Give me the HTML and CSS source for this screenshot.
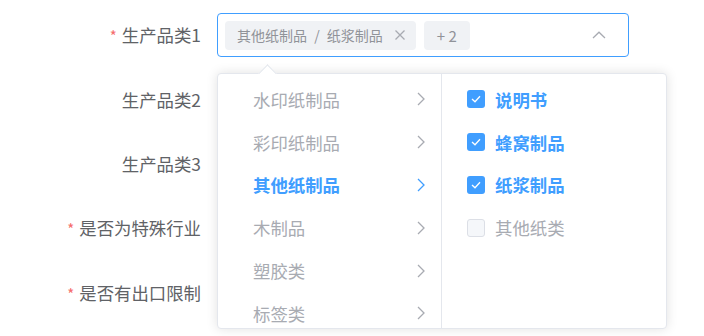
FILE: index.html
```html
<!DOCTYPE html>
<html lang="zh-CN">
<head>
  <meta charset="UTF-8">
  <meta name="viewport" content="width=device-width, initial-scale=1.0">
  <title>生产品类</title>
  <link rel="stylesheet" href="styles.css">
</head>
<body>
  <div class="form">
    <div class="form-item">
      <label class="label required">生产品类1</label>
      <div class="select is-focus">
        <span class="tag"><span class="tag-text">其他纸制品 / 纸浆制品</span><svg class="tag-close" width="12" height="12" viewBox="0 0 12 12"><path d="M1.5 1.5 L10.5 10.5 M10.5 1.5 L1.5 10.5" stroke="#a8abb2" stroke-width="1.3" fill="none"/></svg></span>
        <span class="tag tag-count">+ 2</span>
        <svg class="select-arrow" width="14" height="8" viewBox="0 0 14 8"><path d="M1 7 L7 1.2 L13 7" stroke="#a8abb2" stroke-width="1.3" fill="none"/></svg>
      </div>
    </div>
    <div class="form-item">
      <label class="label">生产品类2</label>
    </div>
    <div class="form-item">
      <label class="label">生产品类3</label>
    </div>
    <div class="form-item">
      <label class="label required">是否为特殊行业</label>
    </div>
    <div class="form-item">
      <label class="label required">是否有出口限制</label>
    </div>
  </div>

  <!-- cascader popper -->
  <div class="popper">
    <span class="popper-arrow"></span>
    <ul class="menu">
      <li class="menu-item">水印纸制品<svg class="chev" width="8" height="14" viewBox="0 0 8 14"><path d="M1 1 L7 7 L1 13" fill="none" stroke-width="1.3"/></svg></li>
      <li class="menu-item">彩印纸制品<svg class="chev" width="8" height="14" viewBox="0 0 8 14"><path d="M1 1 L7 7 L1 13" fill="none" stroke-width="1.3"/></svg></li>
      <li class="menu-item active">其他纸制品<svg class="chev" width="8" height="14" viewBox="0 0 8 14"><path d="M1 1 L7 7 L1 13" fill="none" stroke-width="1.3"/></svg></li>
      <li class="menu-item">木制品<svg class="chev" width="8" height="14" viewBox="0 0 8 14"><path d="M1 1 L7 7 L1 13" fill="none" stroke-width="1.3"/></svg></li>
      <li class="menu-item">塑胶类<svg class="chev" width="8" height="14" viewBox="0 0 8 14"><path d="M1 1 L7 7 L1 13" fill="none" stroke-width="1.3"/></svg></li>
      <li class="menu-item">标签类<svg class="chev" width="8" height="14" viewBox="0 0 8 14"><path d="M1 1 L7 7 L1 13" fill="none" stroke-width="1.3"/></svg></li>
    </ul>
    <ul class="menu menu-leaf">
      <li class="check-item checked"><span class="checkbox"><svg width="10" height="8" viewBox="0 0 10 8"><path d="M1 4 L4 6.8 L9 1.2" fill="none" stroke="#fff" stroke-width="1.3"/></svg></span>说明书</li>
      <li class="check-item checked"><span class="checkbox"><svg width="10" height="8" viewBox="0 0 10 8"><path d="M1 4 L4 6.8 L9 1.2" fill="none" stroke="#fff" stroke-width="1.3"/></svg></span>蜂窝制品</li>
      <li class="check-item checked"><span class="checkbox"><svg width="10" height="8" viewBox="0 0 10 8"><path d="M1 4 L4 6.8 L9 1.2" fill="none" stroke="#fff" stroke-width="1.3"/></svg></span>纸浆制品</li>
      <li class="check-item disabled"><span class="checkbox"></span>其他纸类</li>
    </ul>
  </div>
</body>
</html>
```

FILE: styles.css
```css
body {
  margin: 0;
  font-family: "Noto Sans CJK SC", "Noto Sans", sans-serif;
  background: #fff;
  position: relative;
  height: 336px;
  overflow: hidden;
}

.form {
  padding-top: 13px;
}

.form-item {
  display: flex;
  align-items: center;
  height: 44px;
  margin-bottom: 20.5px;
}

.label {
  width: 217px;
  padding-right: 16px;
  box-sizing: border-box;
  text-align: right;
  font-size: 17.4px;
  color: #606266;
  flex-shrink: 0;
  line-height: 44px;
}

.label.required::before {
  content: "*";
  color: #f56c6c;
  margin-right: 5px;
  font-size: 15px;
}

.select {
  width: 412px;
  height: 44px;
  box-sizing: border-box;
  border: 1px solid #409eff;
  border-radius: 4px;
  display: flex;
  align-items: center;
  gap: 8px;
  padding: 0 22px 0 7px;
}

.tag {
  display: inline-flex;
  align-items: center;
  height: 29px;
  padding: 0 10px 0 12px;
  background: #f0f2f5;
  border-radius: 4px;
  color: #909399;
  font-size: 14px;
  white-space: nowrap;
}

.tag-text {
  word-spacing: 4px;
}

.tag-close {
  margin-left: 11px;
}

.tag-count {
  padding: 0 12px;
  font-size: 15px;
  min-width: 46px;
  box-sizing: border-box;
  justify-content: center;
}

.select-arrow {
  margin-left: auto;
}

.popper {
  position: absolute;
  left: 217px;
  top: 73px;
  width: 450px;
  height: 256px;
  box-sizing: border-box;
  background: #fff;
  border: 1px solid #e4e7ed;
  border-radius: 4px;
  box-shadow: 0 0 12px rgba(0, 0, 0, 0.12);
  display: flex;
}

.popper-arrow {
  position: absolute;
  left: 43px;
  top: -7px;
  width: 12px;
  height: 12px;
  background: #fff;
  border-left: 1px solid #e4e7ed;
  border-top: 1px solid #e4e7ed;
  transform: rotate(45deg);
}

.menu {
  list-style: none;
  margin: 0;
  padding: 4px 0 0;
  width: 224px;
  box-sizing: border-box;
  border-right: 1px solid #e4e7ed;
  overflow: hidden;
}

.menu-leaf {
  border-right: none;
  flex: 1;
}

.menu-item {
  display: flex;
  align-items: center;
  justify-content: space-between;
  height: 42.8px;
  padding: 0 16px 0 35px;
  font-size: 17.4px;
  color: #a8abb2;
}

.menu-item .chev {
  stroke: #a8abb2;
}

.menu-item.active {
  color: #409eff;
  font-weight: bold;
}

.menu-item.active .chev {
  stroke: #409eff;
}

.check-item {
  display: flex;
  align-items: center;
  height: 42.8px;
  padding-left: 25px;
  font-size: 17.4px;
  color: #409eff;
  font-weight: bold;
}

.checkbox {
  width: 18px;
  height: 18px;
  box-sizing: border-box;
  border-radius: 3px;
  margin-right: 10px;
  display: inline-flex;
  align-items: center;
  justify-content: center;
  background: #409eff;
}

.check-item.disabled {
  color: #a8abb2;
  font-weight: normal;
}

.check-item.disabled .checkbox {
  background: #f5f7fa;
  border: 1px solid #dcdfe6;
}
```
